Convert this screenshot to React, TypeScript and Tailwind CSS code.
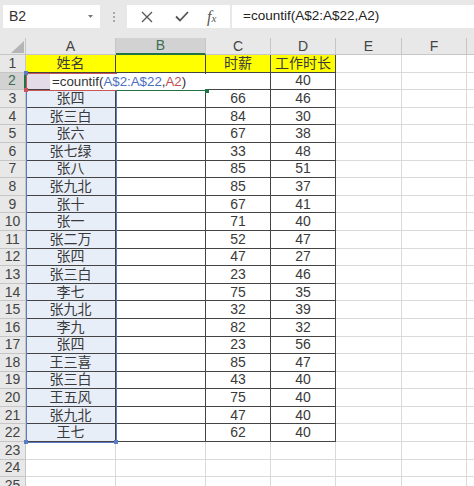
import React from 'react';

const cols = ['A', 'B', 'C', 'D', 'E', 'F', 'G'];

const data: string[][] = [
  ['姓名', '', '时薪', '工作时长'],
  ['', '', '', '40'],
  ['张四', '', '66', '46'],
  ['张三白', '', '84', '30'],
  ['张六', '', '67', '38'],
  ['张七绿', '', '33', '48'],
  ['张八', '', '85', '51'],
  ['张九北', '', '85', '37'],
  ['张十', '', '67', '41'],
  ['张一', '', '71', '40'],
  ['张二万', '', '52', '47'],
  ['张四', '', '47', '27'],
  ['张三白', '', '23', '46'],
  ['李七', '', '75', '35'],
  ['张九北', '', '32', '39'],
  ['李九', '', '82', '32'],
  ['张四', '', '23', '56'],
  ['王三喜', '', '85', '47'],
  ['张三白', '', '43', '40'],
  ['王五风', '', '75', '40'],
  ['张九北', '', '47', '40'],
  ['王七', '', '62', '40'],
];

const font = "font-['Liberation_Sans','Noto_Sans_CJK_SC',sans-serif]";

function cellClass(r: number, c: number) {
  const inTable = r <= 22 && c < 4;
  let cls = 'flex items-center justify-center border-r border-b text-[14px] text-[#3a3a3a] ';
  cls += inTable ? 'border-[#444] ' : 'border-[#dadada] ';
  if (r === 1 && c < 4) cls += 'bg-[#ffff00]';
  else if (r === 2 && c === 0) cls += 'bg-[#e4dbe9]';
  else if (r > 2 && r <= 22 && c === 0) cls += 'bg-[#e8eef8]';
  else cls += 'bg-white';
  return cls;
}

function Toolbar() {
  return (
    <div className="flex h-[38px] items-start bg-[#e8e8e8] pt-[5px]">
      <div className="ml-[3px] flex h-[23px] w-[97px] items-center justify-between bg-white pl-[6px] pr-[7px] text-[14px] text-[#333]">
        <span>B2</span>
        <svg width="5" height="3" viewBox="0 0 5 3">
          <path d="M0 0h5L2.5 3z" fill="#777" />
        </svg>
      </div>
      <div className="flex h-[23px] w-[27px] flex-col items-center justify-center gap-[2px]">
        <span className="h-[2px] w-[2px] bg-[#aaa]" />
        <span className="h-[2px] w-[2px] bg-[#aaa]" />
        <span className="h-[2px] w-[2px] bg-[#aaa]" />
      </div>
      <div className="flex h-[23px] w-[103px] items-center bg-white">
        <svg className="ml-[14px]" width="12" height="12" viewBox="0 0 12 12">
          <path d="M1 1l10 10M11 1L1 11" stroke="#555" strokeWidth="1.3" />
        </svg>
        <svg className="ml-[22px]" width="14" height="11" viewBox="0 0 14 11">
          <path d="M1 5.5l4 4L13 1" stroke="#555" strokeWidth="1.8" fill="none" />
        </svg>
        <span className="ml-[18px] font-['Liberation_Serif',serif] text-[16px] italic leading-none text-[#555]">
          f<span className="text-[11px]">x</span>
        </span>
      </div>
      <div className="ml-[2px] flex h-[23px] flex-1 items-center bg-white pl-[11px] text-[13.5px] text-[#222]">
        =countif(A$2:A$22,A2)
      </div>
    </div>
  );
}

export default function App() {
  const rowNums = Array.from({ length: 25 }, (_, i) => i + 1);
  return (
    <div className={`relative h-[486px] w-[474px] overflow-hidden bg-white ${font}`}>
      <Toolbar />
      <div className="grid grid-cols-[26px_90px_90px_65px_65px_66px_65px_40px] auto-rows-[17.6px] [grid-template-rows:17px]">
        <div className="relative border-r border-b border-[#c6c6c6] bg-[#e8e8e8]">
          <svg className="absolute left-[11px] top-[3px]" width="13" height="12" viewBox="0 0 13 12">
            <path d="M13 0v12H0z" fill="#b5b5b5" />
          </svg>
        </div>
        {cols.map((c) => (
          <div
            key={c}
            className={
              c === 'B'
                ? 'flex items-center justify-center border-r border-b-2 border-r-[#c6c6c6] border-b-[#217346] bg-[#d2d2d2] text-[14px] text-[#3f6e52]'
                : 'flex items-center justify-center border-r border-b border-[#c6c6c6] bg-[#e8e8e8] text-[14px] text-[#444]'
            }
          >
            {c === 'G' ? '' : c}
          </div>
        ))}
        {rowNums.map((r) => (
          <React.Fragment key={r}>
            <div
              className={
                r === 2
                  ? 'flex items-center justify-center border-r-2 border-b border-r-[#217346] border-b-[#c6c6c6] bg-[#d2d2d2] text-[14px] text-[#3f6e52]'
                  : 'flex items-center justify-center border-r border-b border-[#c6c6c6] bg-[#e8e8e8] text-[14px] text-[#444]'
              }
            >
              {r}
            </div>
            {cols.map((_, c) => (
              <div key={c} className={cellClass(r, c)}>
                {data[r - 1]?.[c] ?? ''}
              </div>
            ))}
          </React.Fragment>
        ))}
      </div>

      {/* range highlight A$2:A$22 */}
      <div className="absolute left-[26px] top-[72.6px] h-[370px] w-[91px] border border-[#5b7cc4]" />
      {/* range highlight A2 */}
      <div className="absolute left-[26px] top-[72.6px] h-[18px] w-[91px] border border-[#c9545a]" />
      {/* in-cell editor */}
      <div className="absolute left-[50px] top-[73.6px] flex h-[16px] w-[157px] items-center bg-white pl-[2px] text-[13.3px] text-[#333]">
        <span>=countif(</span>
        <span className="text-[#4a6fc0]">A$2:A$22</span>
        <span>,</span>
        <span className="text-[#c0504d]">A2</span>
        <span>)</span>
      </div>
      <div className="absolute left-[116px] top-[89.6px] h-[1px] w-[91px] bg-[#217346]" />
      {/* handles */}
      <div className="absolute left-[24px] top-[71px] h-[4px] w-[4px] bg-[#5b7cc4]" />
      <div className="absolute left-[24px] top-[88px] h-[4px] w-[4px] bg-[#c9545a]" />
      <div className="absolute left-[24px] top-[440px] h-[4px] w-[4px] bg-[#5b7cc4]" />
      <div className="absolute left-[114px] top-[440px] h-[4px] w-[4px] bg-[#5b7cc4]" />
      <div className="absolute left-[205px] top-[88.5px] h-[4px] w-[4px] bg-[#217346]" />
    </div>
  );
}
